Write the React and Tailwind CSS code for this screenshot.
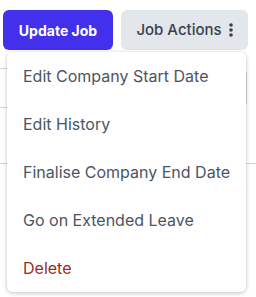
export default function App() {
  const items = [
    'Edit Company Start Date',
    'Edit History',
    'Finalise Company End Date',
    'Go on Extended Leave',
  ];

  return (
    <div className="relative w-[256px] h-[297px] overflow-hidden bg-white font-['Inter',sans-serif]">
      {/* page underneath */}
      <div className="flex gap-2 pl-[3px] pt-[10px]">
        <button className="h-[40px] w-[110px] rounded-md bg-[#4330ec] text-[14px] font-bold text-white">
          Update Job
        </button>
        <button className="flex h-[40px] w-[127px] items-center justify-center gap-[7px] rounded-md bg-[#e3e6ea] text-[15px] font-medium text-[#374151]">
          Job Actions
          <svg width="4" height="14" viewBox="0 0 4 14" className="fill-[#374151]">
            <circle cx="2" cy="2" r="1.8" />
            <circle cx="2" cy="7" r="1.8" />
            <circle cx="2" cy="12" r="1.8" />
          </svg>
        </button>
      </div>
      <div className="ml-[-4px] mt-[18px] h-[40px] w-[251px] rounded-md border border-[#d1d5db]" />
      <div className="mt-[55px] border-t border-[#d1d5db]" />

      {/* dropdown menu */}
      <div className="absolute left-[7px] top-[52px] w-[239px] rounded-md bg-white shadow-[0_1px_4px_rgba(0,0,0,0.25)]">
        {items.map((label) => (
          <div key={label} className="flex h-[48px] items-center whitespace-nowrap px-4 text-[16px] text-[#4b5563]">
            {label}
          </div>
        ))}
        <div className="flex h-[48px] items-center px-4 text-[16px] text-[#9b2c1c]">Delete</div>
      </div>
    </div>
  );
}
